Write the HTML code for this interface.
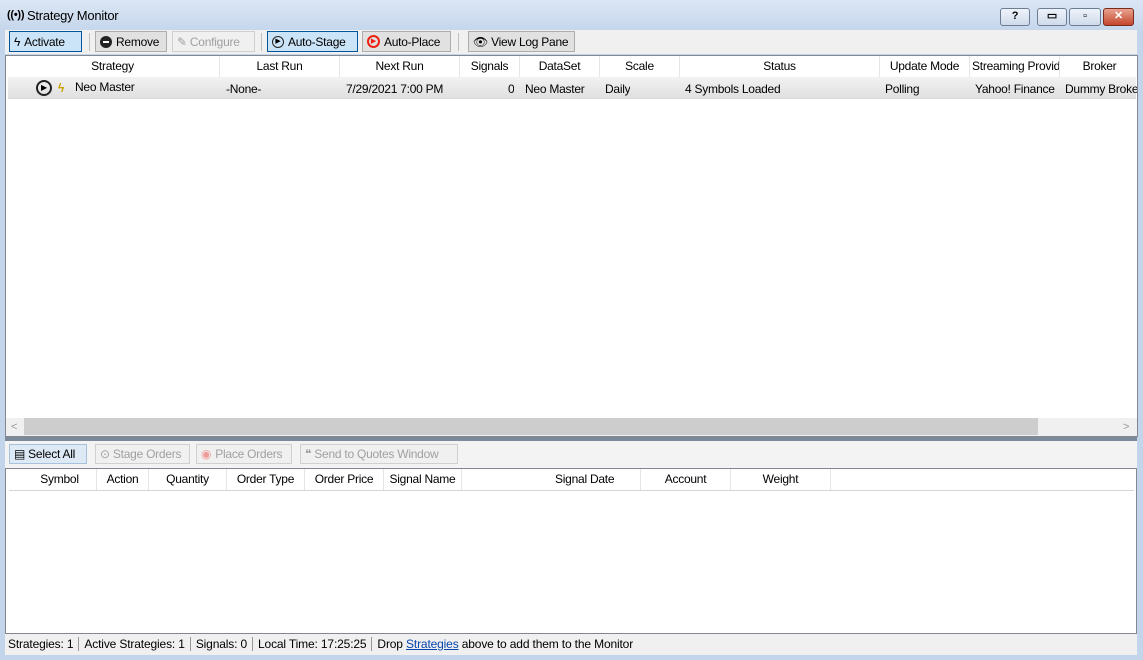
<!DOCTYPE html><html><head><style>
*{box-sizing:border-box;margin:0;padding:0}
body{width:1143px;height:660px;position:relative;overflow:hidden;font-family:"Liberation Sans",sans-serif;font-size:12px;letter-spacing:-0.25px;color:#000;background:#c3d5ea}
.abs{position:absolute}
.title{left:0;top:0;width:1143px;height:30px;background:linear-gradient(#dbe6f4,#c6d7ec)}
.tb{position:absolute;height:21px;border:1px solid #adadad;background:#e1e1e1;display:flex;align-items:center;padding:0 4px;gap:4px;white-space:nowrap}
.tb.on{background:#cce4f7;border-color:#005499}
.tb.dis{color:#a0a0a0;border-color:#d0d0d0;background:#f0f0f0}
.sep{position:absolute;width:1px;height:18px;background:#c0c0c0;top:33px}
.grid{background:#fff;border:1px solid #828790}
.hd{position:absolute;top:0;height:21px;border-right:1px solid #e5e5e5;text-align:center;line-height:21px;white-space:nowrap;overflow:hidden}
.cell{position:absolute;line-height:20px;white-space:nowrap;overflow:hidden}
.wb{position:absolute;top:8px;height:18px;border:1px solid #6c7c93;border-radius:3px;background:linear-gradient(#eef3fa,#cfdbeb);font-size:11px;font-weight:bold;text-align:center;line-height:15px}
</style></head><body>
<div class="abs title"></div>
<div class="abs" style="left:7px;top:9px;font-size:11px;font-weight:bold">((•))</div>
<div class="abs" style="left:27px;top:8px;font-size:13px">Strategy Monitor</div>
<div class="wb" style="left:1000px;width:30px">?</div>
<div class="wb" style="left:1037px;width:30px">▭</div>
<div class="wb" style="left:1069px;width:32px">▫</div>
<div class="wb" style="left:1103px;width:31px;background:linear-gradient(#e9a38f,#c4462c);border-color:#7a2b1d;color:#fff">✕</div>
<div class="abs" style="left:5px;top:30px;width:1132px;height:24px;background:#f0f0f0"></div>
<div class="tb on" style="left:9px;top:31px;width:73px"><span style="font-size:12px">ϟ</span>Activate</div>
<div class="sep" style="left:89px"></div>
<div class="tb" style="left:95px;top:31px;width:72px"><span style="display:inline-block;width:12px;height:12px;border-radius:50%;background:#222;position:relative"><span style="position:absolute;left:3px;top:5px;width:6px;height:2px;background:#fff"></span></span>Remove</div>
<div class="tb dis" style="left:172px;top:31px;width:83px">✎ Configure</div>
<div class="sep" style="left:261px"></div>
<div class="tb on" style="left:267px;top:31px;width:91px"><span style="display:inline-block;width:12px;height:12px;border:1.5px solid #222;border-radius:50%;font-size:7px;line-height:9px;text-align:center">▶</span>Auto-Stage</div>
<div class="tb" style="left:362px;top:31px;width:89px"><span style="display:inline-block;width:13px;height:13px;border:2px solid #e21;border-radius:50%;font-size:7px;line-height:9px;text-align:center;color:#e21">▶</span>Auto-Place</div>
<div class="sep" style="left:458px"></div>
<div class="tb" style="left:468px;top:31px;width:107px">👁 View Log Pane</div>
<div class="abs grid" style="left:5px;top:55px;width:1133px;height:382px;overflow:hidden">
 <div class="hd" style="left:0;width:214px">Strategy</div>
 <div class="hd" style="left:214px;width:120px">Last Run</div>
 <div class="hd" style="left:334px;width:120px">Next Run</div>
 <div class="hd" style="left:454px;width:60px">Signals</div>
 <div class="hd" style="left:514px;width:80px">DataSet</div>
 <div class="hd" style="left:594px;width:80px">Scale</div>
 <div class="hd" style="left:674px;width:200px">Status</div>
 <div class="hd" style="left:874px;width:90px">Update Mode</div>
 <div class="hd" style="left:964px;width:90px;text-align:left;padding-left:2px">Streaming Provider</div>
 <div class="hd" style="left:1054px;width:80px">Broker</div>
 <div class="abs" style="left:2px;top:21px;width:1128px;height:22px;background:linear-gradient(#f2f2f2,#e0e0e0);border-bottom:1px solid #d8d8d8"></div>
 <div class="cell" style="left:30px;top:22px;width:16px;height:16px;margin-top:2px;border:2px solid #222;border-radius:50%;font-size:8px;line-height:12px;text-align:center">▶</div>
 <div class="cell" style="left:52px;top:22px;color:#c9a200;font-weight:bold">ϟ</div>
 <div class="cell" style="left:69px;top:21px">Neo Master</div>
 <div class="cell" style="left:220px;top:23px">-None-</div>
 <div class="cell" style="left:340px;top:23px">7/29/2021 7:00 PM</div>
 <div class="cell" style="left:502px;top:23px">0</div>
 <div class="cell" style="left:519px;top:23px">Neo Master</div>
 <div class="cell" style="left:599px;top:23px">Daily</div>
 <div class="cell" style="left:679px;top:23px">4 Symbols Loaded</div>
 <div class="cell" style="left:879px;top:23px">Polling</div>
 <div class="cell" style="left:969px;top:23px;width:84px">Yahoo! Finance</div>
 <div class="cell" style="left:1059px;top:23px;width:72px">Dummy Broker</div>
 <div class="abs" style="left:0;top:362px;width:1131px;height:18px;background:#f0f0f0"></div>
 <div class="abs" style="left:18px;top:362px;width:1014px;height:17px;background:#cdcdcd"></div>
 <div class="abs" style="left:5px;top:362px;color:#999;font-size:11px;line-height:18px">&lt;</div>
 <div class="abs" style="left:1117px;top:362px;color:#999;font-size:11px;line-height:18px">&gt;</div>
</div>
<div class="abs" style="left:5px;top:437px;width:1132px;height:4px;background:#7b8a9a"></div>
<div class="abs" style="left:5px;top:441px;width:1132px;height:27px;background:#f3f3f3"></div>
<div class="tb on" style="left:9px;top:444px;width:78px;height:20px;background:#dde9f5;border-color:#a8c2dd">▤ Select All</div>
<div class="tb dis" style="left:95px;top:444px;width:95px;height:20px">⊙ Stage Orders</div>
<div class="tb dis" style="left:196px;top:444px;width:96px;height:20px"><span style="color:#f09a9a">◉</span> Place Orders</div>
<div class="tb dis" style="left:300px;top:444px;width:158px;height:20px">❝ Send to Quotes Window</div>
<div class="abs grid" style="left:5px;top:468px;width:1132px;height:166px;overflow:hidden">
 <div class="hd" style="left:0;width:91px;padding-left:17px">Symbol</div>
 <div class="hd" style="left:91px;width:52px">Action</div>
 <div class="hd" style="left:143px;width:78px">Quantity</div>
 <div class="hd" style="left:221px;width:78px">Order Type</div>
 <div class="hd" style="left:299px;width:79px">Order Price</div>
 <div class="hd" style="left:378px;width:78px">Signal Name</div>
 <div class="hd" style="left:456px;width:179px;text-align:left;padding-left:93px">Signal Date</div>
 <div class="hd" style="left:635px;width:90px">Account</div>
 <div class="hd" style="left:725px;width:100px">Weight</div>
 <div class="abs" style="left:3px;top:21px;width:1125px;height:1px;background:#d5d5d5"></div>
</div>
<div class="abs" style="left:5px;top:634px;width:1132px;height:21px;background:#f0f0f0;line-height:20px;white-space:nowrap;letter-spacing:-0.15px">
 <span style="margin-left:3px">Strategies: 1</span><span style="border-left:1px solid #999;margin:0 5px"></span>Active Strategies: 1<span style="border-left:1px solid #999;margin:0 5px"></span>Signals: 0<span style="border-left:1px solid #999;margin:0 5px"></span>Local Time: 17:25:25<span style="border-left:1px solid #999;margin:0 5px"></span>Drop <span style="color:#0645ad;text-decoration:underline">Strategies</span> above to add them to the Monitor
</div>
</body></html>
